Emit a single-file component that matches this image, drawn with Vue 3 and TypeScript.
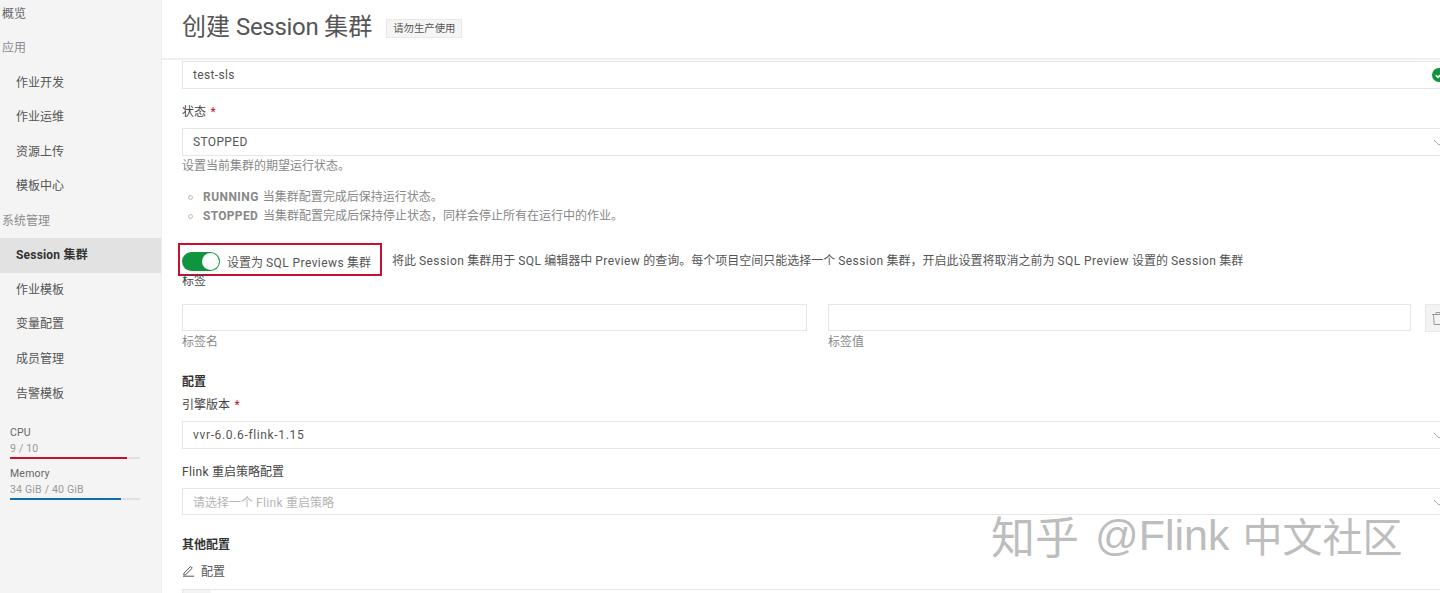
<script setup lang="ts">
interface NavRow { label: string; kind: 'top' | 'group' | 'item' | 'active' }
const nav: NavRow[] = [
  { label: '概览', kind: 'top' },
  { label: '应用', kind: 'group' },
  { label: '作业开发', kind: 'item' },
  { label: '作业运维', kind: 'item' },
  { label: '资源上传', kind: 'item' },
  { label: '模板中心', kind: 'item' },
  { label: '系统管理', kind: 'group' },
  { label: 'Session 集群', kind: 'active' },
  { label: '作业模板', kind: 'item' },
  { label: '变量配置', kind: 'item' },
  { label: '成员管理', kind: 'item' },
  { label: '告警模板', kind: 'item' },
]
const usage = [
  { name: 'CPU', value: '9 / 10', pct: 90, color: '#c8102e' },
  { name: 'Memory', value: '34 GiB / 40 GiB', pct: 85, color: '#0f6cb0' },
]
</script>

<template>
  <div class="page">
    <aside class="side">
      <nav class="nav">
        <div v-for="n in nav" :key="n.label" class="row" :class="n.kind">{{ n.label }}</div>
      </nav>
      <div class="usage">
        <div v-for="u in usage" :key="u.name" class="meter">
          <div class="m-name">{{ u.name }}</div>
          <div class="m-val">{{ u.value }}</div>
          <div class="track"><div class="fill" :style="{ width: u.pct + '%', background: u.color }"></div></div>
        </div>
      </div>
    </aside>

    <main class="main">
      <header class="head">
        <h1 class="title">创建 <span class="t-latin">Session</span> 集群</h1>
        <span class="badge">请勿生产使用</span>
      </header>

      <form class="form">
        <div class="input first">
          <span class="latin">test-sls</span>
          <svg class="end" width="14" height="14" viewBox="0 0 14 14">
            <circle cx="7" cy="7" r="7" fill="#0f9440" />
            <path d="M3.8 7.2l2.2 2.2 4.2-4.4" fill="none" stroke="#fff" stroke-width="1.6" />
          </svg>
        </div>

        <label class="label l-state">状态 <i>*</i></label>
        <div class="input">
          <span class="latin">STOPPED</span>
          <svg class="end" width="14" height="14" viewBox="0 0 14 14"><path d="M2 5l5 5 5-5" fill="none" stroke="#aaa" stroke-width="1" /></svg>
        </div>
        <p class="help">设置当前集群的期望运行状态。</p>
        <ul class="states">
          <li><b class="run">RUNNING</b> 当集群配置完成后保持运行状态。</li>
          <li><b class="stop">STOPPED</b> 当集群配置完成后保持停止状态，同样会停止所有在运行中的作业。</li>
        </ul>

        <div class="preview">
          <div class="redbox">
            <span class="switch"><span class="knob"></span></span>
            <span class="sw-label">设置为 <span class="wide">SQL Previews</span> 集群</span>
          </div>
          <span class="sw-help">将此 <span class="wide">Session</span> 集群用于 <span class="wide">SQL</span> 编辑器中 <span class="wide">Preview</span> 的查询。每个项目空间只能选择一个 <span class="wide">Session</span> 集群，开启此设置将取消之前为 <span class="wide">SQL Preview</span> 设置的 <span class="wide">Session</span> 集群</span>
        </div>

        <label class="label l-tags">标签</label>
        <div class="tags">
          <div class="tag-a"><div class="input"></div><div class="help tag-help">标签名</div></div>
          <div class="tag-b"><div class="input"></div><div class="help tag-help">标签值</div></div>
          <div class="trash">
            <svg width="14" height="15" viewBox="0 0 14 15" fill="none" stroke="#999" stroke-width="1">
              <path d="M1 3.5h12M5 3.5V1.5h4v2M2.5 3.5l.7 10h7.6l.7-10" />
            </svg>
          </div>
        </div>

        <h3 class="section s-config">配置</h3>
        <label class="label l-engine">引擎版本 <i>*</i></label>
        <div class="input">
          <span class="version">vvr-6.0.6-flink-1.15</span>
          <svg class="end" width="14" height="14" viewBox="0 0 14 14"><path d="M2 5l5 5 5-5" fill="none" stroke="#aaa" stroke-width="1" /></svg>
        </div>
        <label class="label l-restart"><span class="latin">Flink</span> 重启策略配置</label>
        <div class="input">
          <span class="ph">请选择一个 <span class="latin">Flink</span> 重启策略</span>
          <svg class="end" width="14" height="14" viewBox="0 0 14 14"><path d="M2 5l5 5 5-5" fill="none" stroke="#aaa" stroke-width="1" /></svg>
        </div>

        <h3 class="section s-other">其他配置</h3>
        <div class="edit">
          <svg width="13" height="13" viewBox="0 0 13 13" fill="none" stroke="#555" stroke-width="1">
            <path d="M2 9.2L8.6 2.4l1.7 1.7-6.7 6.6-1.9.2zM1 12.2h11" />
          </svg>
          <span>配置</span>
        </div>
        <div class="editor"><div class="gutter"></div></div>
      </form>

      <div class="mark">
        <span class="mk-a">知乎</span>
        <span class="mk-b">@Flink</span>
        <span class="mk-c">中文社区</span>
      </div>
    </main>
  </div>
</template>

<style>
html, body { margin: 0; overflow: hidden; background: #fff; }
</style>

<style scoped>
.page {
  display: flex;
  width: 1440px;
  height: 593px;
  overflow: hidden;
  font-family: Roboto, "Noto Sans CJK SC", sans-serif;
  font-size: 12px;
  color: #555;
  background: #fff;
}
.side {
  flex: 0 0 162px;
  height: 593px;
  background: #f4f4f4;
  box-sizing: border-box;
  border-right: 1px solid #eee;
  overflow: hidden;
}
.nav { margin-top: -3.5px; }
.row {
  height: 34.55px;
  line-height: 34.55px;
  padding-left: 16px;
  white-space: nowrap;
}
.row.top { padding-left: 2px; color: #666; }
.row.group { padding-left: 2px; color: #8c8c8c; }
.row.active { background: #e2e2e2; color: #333; font-weight: 700; letter-spacing: .2px; }
.usage { margin-top: 13.5px; padding-left: 10px; width: 130px; }
.meter { height: 41.5px; }
.m-name { font-size: 10.5px; line-height: 16px; color: #666; letter-spacing: .2px; }
.m-val { font-size: 10.5px; line-height: 16px; color: #999; letter-spacing: .2px; }
.track { height: 2px; background: #e0e0e0; }
.fill { height: 2px; }

.main { position: relative; flex: 1 1 auto; min-width: 0; overflow: hidden; }
.head {
  display: flex;
  align-items: center;
  box-sizing: border-box;
  height: 60px;
  margin-bottom: 1px;
  padding: 0 0 4px 20px;
  border-bottom: 2px solid #eee;
}
.title { margin: 0; font-size: 24px; font-weight: 400; color: #555; white-space: nowrap; line-height: 32px; }
.t-latin { letter-spacing: -.3px; }
.badge {
  margin: 2px 0 0 14px;
  width: 76px;
  height: 19px;
  line-height: 17px;
  text-align: center;
  font-size: 10.4px;
  color: #555;
  background: #f5f5f5;
  border: 1px solid #e8e8e8;
  box-sizing: border-box;
}
.form { width: 1273px; margin-left: 20px; }
.input {
  position: relative;
  box-sizing: border-box;
  display: flex;
  align-items: center;
  height: 27.5px;
  padding-left: 10px;
  border: 1px solid #e6e6e6;
  background: #fff;
  color: #555;
}
.latin { letter-spacing: .35px; }
.wide { letter-spacing: .43px; }
.version { letter-spacing: .65px; }
.end { position: absolute; right: 8px; top: 6px; }
.ph { color: #b5b5b5; white-space: nowrap; }
.label { display: block; color: #444; line-height: 18px; white-space: nowrap; }
.label i { font-style: normal; color: #c8102e; margin-left: 1.5px; }
.l-state { margin-top: 14.5px; margin-bottom: 7px; }
.help { margin: 0; color: #888; line-height: 18px; }
.form > .help { margin-top: 1.5px; }
.states { list-style: none; margin: 13px 0 0; padding: 0 0 0 21px; color: #888; }
.states li { position: relative; line-height: 19px; white-space: nowrap; }
.states li::before {
  content: "";
  position: absolute;
  left: -15px;
  top: 7px;
  width: 3px;
  height: 3px;
  border: 1px solid #bbb;
  border-radius: 50%;
}
.states b { color: #888; }
.run { letter-spacing: .45px; margin-right: 1px; }
.stop { letter-spacing: .3px; margin-right: 2px; }
.preview { display: flex; align-items: center; margin-top: 16.5px; margin-left: -4px; white-space: nowrap; }
.redbox {
  display: flex;
  align-items: center;
  box-sizing: border-box;
  width: 204px;
  height: 33px;
  padding: 5px 0 0 2px;
  border: 2px solid #c8102e;
}
.switch {
  position: relative;
  display: block;
  flex: none;
  width: 38px;
  height: 19px;
  border-radius: 10px;
  background: #0f9440;
}
.knob {
  position: absolute;
  right: 1px;
  top: 1px;
  width: 17px;
  height: 17px;
  border-radius: 50%;
  background: #fff;
}
.sw-label { margin-left: 7px; color: #555; }
.sw-help { margin-left: 10px; color: #555; }
.l-tags { margin-top: -4px; margin-bottom: 14px; }
.tags { display: flex; align-items: flex-start; }
.tag-a { flex: 0 0 625px; }
.tag-b { flex: 0 0 583px; margin-left: 21px; }
.tag-help { margin-top: 2px; }
.trash {
  flex: 0 0 30px;
  height: 28px;
  margin-left: 14px;
  box-sizing: border-box;
  padding: 6px 0 0 5px;
  background: #f3f3f3;
  border: 1px solid #e8e8e8;
}
.section { margin: 0; font-size: 12px; font-weight: 700; color: #333; line-height: 18px; }
.s-config { margin-top: 22px; }
.l-engine { margin-top: 5px; margin-bottom: 7px; }
.l-restart { margin-top: 14px; margin-bottom: 7px; }
.s-other { margin-top: 21px; }
.edit { display: flex; align-items: center; gap: 6px; margin-top: 7px; height: 18px; color: #555; }
.editor {
  margin-top: 10px;
  height: 40px;
  border: 1px solid #e6e6e6;
  box-sizing: border-box;
}
.gutter { width: 28px; height: 100%; background: #f3f3f3; }
.mark {
  position: absolute;
  left: 829px;
  top: 508px;
  display: flex;
  align-items: center;
  height: 54px;
  font-family: "Liberation Sans", "Noto Sans CJK SC", sans-serif;
  color: #bdbdbd;
  white-space: nowrap;
  pointer-events: none;
}
.mk-a { font-size: 44px; }
.mk-b { font-size: 43px; margin-left: 16px; }
.mk-c { font-size: 40px; margin-left: 13px; }
</style>
